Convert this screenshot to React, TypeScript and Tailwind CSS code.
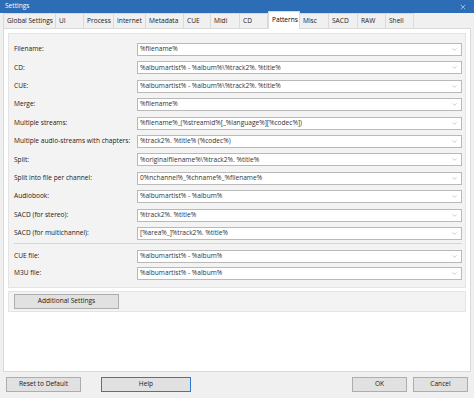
import { ChevronDown, X } from 'lucide-react';

const tabs = [
  { name: 'Global Settings', w: 53 },
  { name: 'UI', w: 28 },
  { name: 'Process', w: 30 },
  { name: 'Internet', w: 32 },
  { name: 'Metadata', w: 38 },
  { name: 'CUE', w: 27 },
  { name: 'Midi', w: 29 },
  { name: 'CD', w: 28 },
  { name: 'Patterns', w: 32 },
  { name: 'Misc', w: 29 },
  { name: 'SACD', w: 29 },
  { name: 'RAW', w: 28 },
  { name: 'Shell', w: 28 },
];

const patterns = [
  { label: 'Filename:', value: '%filename%' },
  { label: 'CD:', value: '%albumartist% - %album%\\%track2%. %title%' },
  { label: 'CUE:', value: '%albumartist% - %album%\\%track2%. %title%' },
  { label: 'Merge:', value: '%filename%' },
  { label: 'Multiple streams:', value: '%filename%_(%streamid%[_%language%][%codec%])' },
  { label: 'Multiple audio-streams with chapters:', value: '%track2%. %title% (%codec%)' },
  { label: 'Split:', value: '%originalfilename%\\%track2%. %title%' },
  { label: 'Split into file per channel:', value: '0%nchannel%_%chname%_%filename%' },
  { label: 'Audiobook:', value: '%albumartist% - %album%' },
  { label: 'SACD (for stereo):', value: '%track2%. %title%' },
  { label: 'SACD (for multichannel):', value: '[%area%_]%track2%. %title%' },
];

const lists = [
  { label: 'CUE file:', value: '%albumartist% - %album%' },
  { label: 'M3U file:', value: '%albumartist% - %album%' },
];

const Row = ({ label, value }: { label: string; value: string }) => (
  <div className="flex items-center h-[13px]">
    <div className="w-[123px] shrink-0 text-[#1a1a1a] whitespace-nowrap">{label}</div>
    <div className="flex-1 h-[13px] bg-white border border-[#b9b9b9] flex items-center pl-[2px] pr-[3px]">
      <span className="flex-1 text-[#333] whitespace-nowrap">{value}</span>
      <ChevronDown size={7} strokeWidth={1.5} className="text-[#8a8a8a]" />
    </div>
  </div>
);

const Btn = ({ children, w, focus }: { children: string; w: string; focus?: boolean }) => (
  <button
    className={`${w} h-[15px] bg-[#e1e1e1] text-[#1a1a1a] flex items-center justify-center border whitespace-nowrap ${
      focus ? 'border-[#2a7ad3]' : 'border-[#adadad]'
    }`}
  >
    {children}
  </button>
);

export default function App() {
  return (
    <div
      className="w-[474px] h-[398px] bg-[#f0f0f0] flex flex-col text-[6.6px] leading-[1.3] overflow-hidden"
      style={{ fontFamily: '"Open Sans", "Noto Sans", sans-serif' }}
    >
      {/* title bar */}
      <div className="h-[13px] bg-[#2d6db6] flex items-center justify-between pl-[5px] pr-[7px] text-white">
        <span>Settings</span>
        <X size={8} strokeWidth={1.5} />
      </div>

      {/* tabs */}
      <div className="h-[15px] flex items-end pl-[3px]">
        {tabs.map((t) =>
          t.name === 'Patterns' ? (
            <div
              key={t.name}
              style={{ width: t.w }}
              className="h-[18px] -mb-px bg-white border border-b-0 border-[#d9d9d9] flex items-center pl-[3px] z-10 relative whitespace-nowrap"
            >
              {t.name}
            </div>
          ) : (
            <div
              key={t.name}
              style={{ width: t.w }}
              className="h-[15px] bg-[#f0f0f0] border border-b-0 border-l-0 first:border-l border-[#dadada] flex items-center pl-[3px] text-[#1a1a1a] whitespace-nowrap"
            >
              {t.name}
            </div>
          )
        )}
      </div>

      {/* panel */}
      <div className="mx-[3px] h-[344px] bg-white border border-[#d9d9d9] px-[4px] pt-[4px] flex flex-col">
        <div className="bg-[#f3f3f3] border border-[#e4e4e4] pl-[5px] pr-[3px] pt-[9px] pb-[7px] flex flex-col">
          <div className="flex flex-col gap-[5.4px]">
            {patterns.map((p) => (
              <Row key={p.label} {...p} />
            ))}
          </div>
          <div className="h-px bg-[#d6d6d6] mt-[3px] mb-[6px]" />
          <div className="flex flex-col gap-[4px]">
            {lists.map((p) => (
              <Row key={p.label} {...p} />
            ))}
          </div>
        </div>
        <div className="mt-[3px] bg-[#f3f3f3] border border-[#e4e4e4] h-[21px] flex items-center pl-[5px]">
          <Btn w="w-[105px]">Additional Settings</Btn>
        </div>
      </div>

      {/* footer buttons */}
      <div className="flex items-center mt-[5px] px-[6px]">
        <Btn w="w-[75px]">Reset to Default</Btn>
        <div className="w-[20px]" />
        <Btn w="w-[90px]" focus>
          Help
        </Btn>
        <div className="flex-1" />
        <Btn w="w-[55px]">OK</Btn>
        <div className="w-[6px]" />
        <Btn w="w-[55px]">Cancel</Btn>
      </div>
    </div>
  );
}
